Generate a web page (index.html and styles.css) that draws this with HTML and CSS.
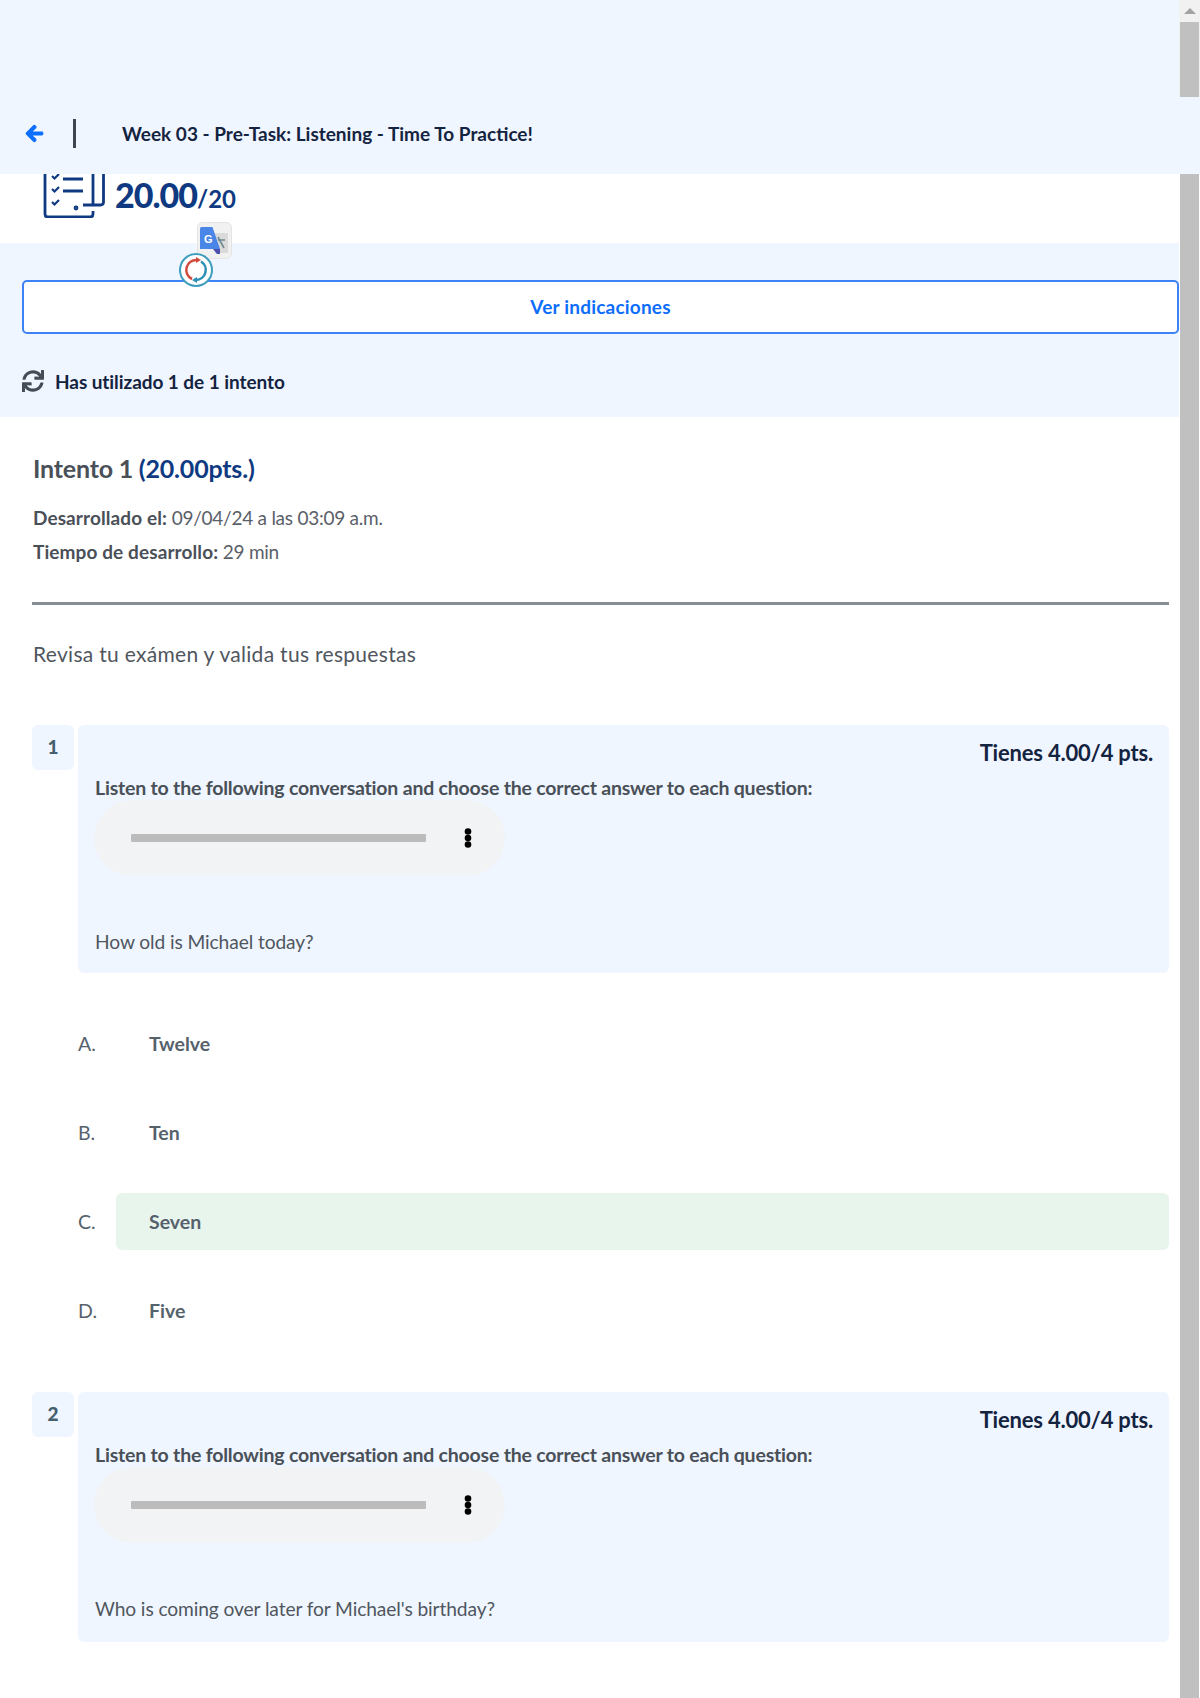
FILE: index.html
```html
<!DOCTYPE html>
<html lang="es">
<head>
<meta charset="utf-8">
<title>Week 03 - Pre-Task: Listening - Time To Practice!</title>
<link rel="stylesheet" href="styles.css">
</head>
<body>
<div class="page">
  <header class="topbar">
    <svg class="back" viewBox="0 0 448 512" width="17" height="19"><path fill="#0d6efd" stroke="#0d6efd" stroke-width="30" d="M257.5 445.1l-22.2 22.2c-9.4 9.4-24.6 9.4-33.9 0L7 273c-9.4-9.4-9.4-24.6 0-33.9L201.4 44.7c9.4-9.4 24.6-9.4 33.900 0l22.2 22.2c9.5 9.500 9.300 25-.4 34.300L136.600 216H424c13.300 0 24 10.700 24 24v32c0 13.300-10.700 24-24 24H136.600l120.500 114.800c9.800 9.300 10 24.800.4 34.300z"/></svg>
    <span class="divider"></span>
    <span class="topbar-title">Week 03 - Pre-Task: Listening - Time To Practice!</span>
  </header>

  <section class="score-card">
    <svg class="score-icon" viewBox="0 0 62 44" width="62" height="44" fill="none" stroke="#0f3a82" stroke-width="2.800">
      <path d="M2 0V40Q2 43 5 43H47Q50 43 50 40V37"/>
      <path d="M50 0V31"/>
      <path d="M60.500 0V28Q60.500 31 57.500 31H40"/>
      <path d="M9 2 11.500 4.500 16 0M9 15 11.500 17.500 16 13M9 28 11.500 30.500 16 26" stroke-width="2.200"/>
      <path d="M20 5H40M20 17H40"/>
      <circle cx="33" cy="34" r="1"/>
    </svg>
    <span class="score-value">20.00<small>/20</small></span>
  </section>

  <section class="summary">
    <button class="outline-btn">Ver indicaciones</button>
    <div class="attempts">
      <svg viewBox="0 0 512 512" width="22" height="22" fill="#444c55"><path d="M440.65 12.57l4 82.77A247.16 247.16 0 0 0 255.83 8C134.73 8 33.91 94.92 12.29 209.82A12 12 0 0 0 24.09 224h49.05a12 12 0 0 0 11.67-9.26 175.91 175.91 0 0 1 317-56.94l-101.46-4.86a12 12 0 0 0-12.57 12v47.41a12 12 0 0 0 12 12H500a12 12 0 0 0 12-12V12a12 12 0 0 0-12-12h-47.37a12 12 0 0 0-11.98 12.57zM255.83 432a175.61 175.61 0 0 1-146-77.8l101.8 4.87a12 12 0 0 0 12.57-12v-47.4a12 12 0 0 0-12-12H12a12 12 0 0 0-12 12V500a12 12 0 0 0 12 12h47.35a12 12 0 0 0 12-12.6l-4.15-82.57A247.17 247.17 0 0 0 255.83 504c121.11 0 221.93-86.92 243.55-201.82a12 12 0 0 0-11.8-14.18h-49.05a12 12 0 0 0-11.67 9.26A175.86 175.86 0 0 1 255.83 432z"/></svg>
      <span>Has utilizado 1 de 1 intento</span>
    </div>
  </section>

  <main class="content">
    <h2 class="attempt-title">Intento 1 <span>(20.00pts.)</span></h2>
    <p class="meta"><b>Desarrollado el:</b> 09/04/24 a las 03:09 a.m.</p>
    <p class="meta"><b>Tiempo de desarrollo:</b> 29 min</p>
    <hr class="rule">
    <p class="review">Revisa tu exámen y valida tus respuestas</p>

    <article class="question">
      <div class="q-num">1</div>
      <div class="q-box">
        <div class="q-pts">Tienes 4.00/4 pts.</div>
        <div class="q-lead">Listen to the following conversation and choose the correct answer to each question:</div>
        <div class="player"><span class="track"></span><svg class="dots" viewBox="0 0 8 20" width="8" height="20"><circle cx="4" cy="3.500" r="3.300"/><circle cx="4" cy="10" r="3.300"/><circle cx="4" cy="16.500" r="3.300"/></svg></div>
        <div class="q-text">How old is Michael today?</div>
      </div>
    </article>

    <ol class="options">
      <li class="option"><span class="letter">A.</span><span class="answer">Twelve</span></li>
      <li class="option"><span class="letter">B.</span><span class="answer">Ten</span></li>
      <li class="option correct"><span class="letter">C.</span><span class="answer">Seven</span></li>
      <li class="option"><span class="letter">D.</span><span class="answer">Five</span></li>
    </ol>

    <article class="question">
      <div class="q-num">2</div>
      <div class="q-box">
        <div class="q-pts">Tienes 4.00/4 pts.</div>
        <div class="q-lead">Listen to the following conversation and choose the correct answer to each question:</div>
        <div class="player"><span class="track"></span><svg class="dots" viewBox="0 0 8 20" width="8" height="20"><circle cx="4" cy="3.500" r="3.300"/><circle cx="4" cy="10" r="3.300"/><circle cx="4" cy="16.500" r="3.300"/></svg></div>
        <div class="q-text">Who is coming over later for Michael's birthday?</div>
      </div>
    </article>
  </main>

  <div class="ext-translate">
    <svg viewBox="0 0 35 37" width="35" height="37">
      <rect x="0.500" y="0.500" width="34" height="36" rx="5" fill="#f1f1f1" stroke="#e4e4e4"/>
      <rect x="18" y="11" width="13" height="20" fill="#dadada"/>
      <path d="M21 15 27 26M28 18H21" stroke="#6f8a8f" stroke-width="1.600" fill="none"/>
      <path d="M4.500 5H15.500L23 27H3V6.500Q3 5 4.500 5Z" fill="#4a86e8"/>
      <path d="M16 27H23V32H20Z" fill="#4a4fb0"/>
      <text x="7" y="20.500" class="ext-g">G</text>
    </svg>
  </div>
  <div class="ext-sync">
    <svg viewBox="0 0 36 36" width="36" height="36" fill="none">
      <circle cx="18" cy="18" r="16" stroke="#3d9dbd" stroke-width="2" fill="#fff"/>
      <path d="M19 8A10 10 0 0 0 14 27" stroke="#d34a3f" stroke-width="2.500"/>
      <path d="M18 5 23 8 18 11Z" fill="#d34a3f"/>
      <path d="M18 28A10 10 0 0 0 23 9.500" stroke="#2c90b5" stroke-width="2.500"/>
      <path d="M19 25 14 28 19 31Z" fill="#2c90b5"/>
    </svg>
  </div>

  <div class="scrollbar">
    <div class="sb-up"></div>
    <div class="sb-thumb-top"></div>
    <div class="sb-thumb-main"></div>
  </div>
</div>
</body>
</html>
```
FILE: styles.css
```css
* { box-sizing: border-box; }
html, body { margin: 0; padding: 0; }
body { font-family: Lato, "Liberation Sans", sans-serif; background: #fff; color: #4a5058; overflow: hidden; }
.page { position: relative; width: 1200px; height: 1698px; overflow: hidden; }

.topbar { height: 174px; background: #eff6ff; display: flex; align-items: center; padding: 92px 0 0 26px; }
.back { flex: none; overflow: visible; }
.divider { width: 2.500px; height: 29px; background: #3f4650; margin-left: 30px; }
.topbar-title { margin-left: 46.500px; font-size: 19px; font-weight: 700; color: #14233f; letter-spacing: 0; }

.score-card { width: 1179px; height: 69px; padding-left: 43px; display: flex; align-items: flex-start; background: #fff; border-radius: 0 0 8px 8px; }
.score-icon { flex: none; }
.score-value { margin: -1px 0 0 10px; font-size: 34px; font-weight: 900; line-height: 44px; color: #0f3a82; letter-spacing: -1px; }
.score-value small { font-size: 24px; font-weight: 700; letter-spacing: 0; }

.summary { width: 1179px; height: 174px; background: #eff6ff; padding: 37px 0 0 22px; }
.outline-btn { display: block; width: 100%; height: 54px; padding: 0 0 2px; background: #fff; border: 2px solid #3d83f5; border-radius: 5px; color: #0d6efd; font: 700 19px Lato, sans-serif; letter-spacing: 0.2px; }
.attempts { display: flex; align-items: center; gap: 11px; margin-top: 34px; height: 26px; font-size: 19px; font-weight: 700; color: #14233f; letter-spacing: -0.07px; }

.content { width: 1179px; padding: 33px 10px 0 32px; }
.attempt-title { margin: 0 0 15px; padding-left: 1px; font-size: 25px; line-height: 36px; font-weight: 700; color: #4a5058; letter-spacing: -0.2px; }
.attempt-title span { color: #0f3a82; }
.meta { margin: 0; padding-left: 1px; font-size: 19px; line-height: 34px; color: #5a6068; letter-spacing: -0.25px; }
.meta b { color: #4a5058; letter-spacing: 0.1px; }
.rule { margin: 33px 0 0; border: 0; height: 3px; background: #868e96; }
.review { margin: 34px 0 0; padding-left: 1px; font-size: 21px; line-height: 30px; color: #50565e; letter-spacing: 0.3px; }

.question { display: flex; gap: 4px; margin-top: 56px; }
.q-num { flex: none; width: 42px; height: 45px; padding-bottom: 2px; display: flex; align-items: center; justify-content: center; background: #eff6ff; border-radius: 6px; font-size: 19px; font-weight: 900; color: #46606e; }
.q-box { flex: 1; height: 248px; padding: 14px 16px 0 17px; background: #eff6ff; border-radius: 6px; }
.question:last-child .q-box { height: 250px; }
.q-pts { text-align: right; font-size: 22px; line-height: 28px; font-weight: 700; color: #14233f; letter-spacing: -0.2px; }
.q-lead { margin-top: 8px; font-size: 19.500px; line-height: 26px; font-weight: 700; color: #4a5058; letter-spacing: -0.2px; }
.player { width: 411px; height: 76px; margin: -1px 0 0 -1px; display: flex; align-items: center; padding: 0 33px 0 37px; background: #f1f3f4; border-radius: 38px; }
.track { width: 295px; height: 8px; background: #bcbcbc; border-radius: 1px; }
.dots { margin-left: auto; fill: #000; }
.q-text { margin-top: 53px; font-size: 19.200px; line-height: 26px; color: #50565e; letter-spacing: -0.1px; }

.options { list-style: none; margin: 42.400px 0 0; padding: 0 0 0 46px; display: flex; flex-direction: column; gap: 31.800px; }
.option { display: flex; align-items: center; height: 57px; font-size: 19.500px; }
.letter { width: 38px; color: #55626c; }
.answer { flex: 1; align-self: stretch; display: flex; align-items: center; padding-left: 33px; font-weight: 700; color: #55626c; border-radius: 6px; }
.correct .answer { background: #e8f5ec; }

.options + .question { margin-top: 53px; }

.ext-translate { position: absolute; left: 197px; top: 222px; width: 35px; height: 37px; }
.ext-g { font: 700 11px "Liberation Sans", sans-serif; fill: #fff; }
.ext-sync { position: absolute; left: 178px; top: 252px; width: 36px; height: 36px; }

.scrollbar { position: absolute; right: 0; top: 0; width: 21px; height: 100%; }
.sb-up { position: absolute; left: 0; top: 0; width: 21px; height: 97px; background: #f1f1f1; }
.sb-up::before { content: ""; position: absolute; left: 5px; top: 8px; border: 6px solid transparent; border-top: 0; border-bottom: 6px solid #a3a3a3; }
.sb-thumb-top { position: absolute; left: 1px; top: 22px; width: 19px; height: 75px; background: #c0c0c0; }
.sb-thumb-main { position: absolute; left: 1px; top: 174px; width: 19px; bottom: 0; background: #c0c0c0; }
```
